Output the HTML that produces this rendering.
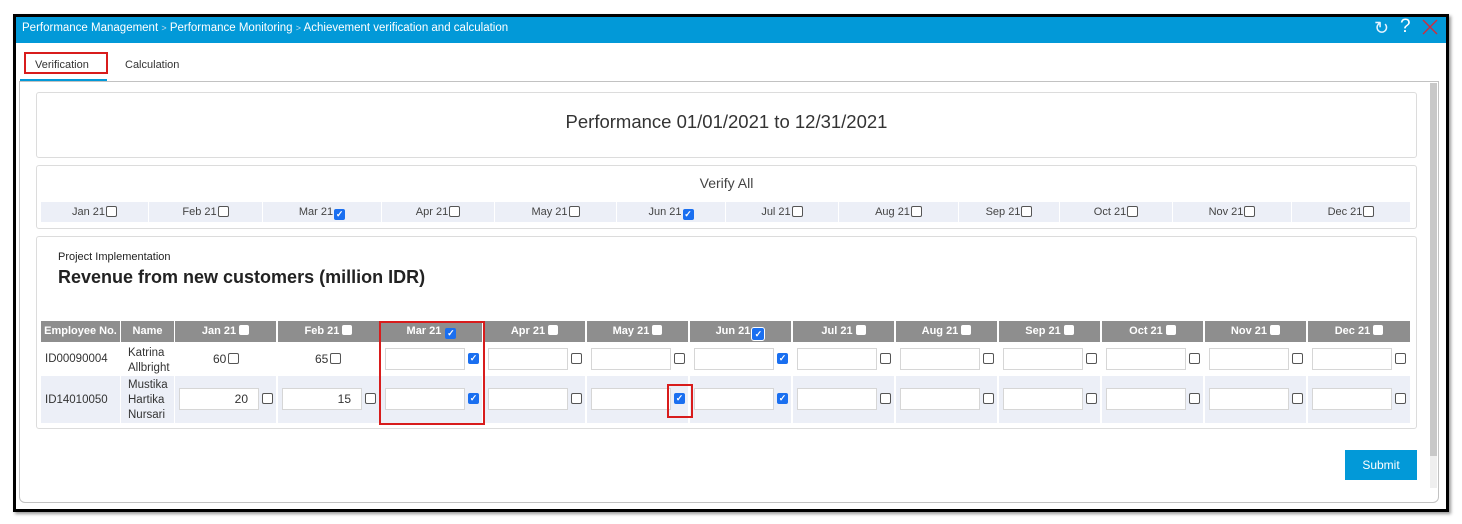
<!DOCTYPE html>
<html><head><meta charset="utf-8"><style>
*{box-sizing:border-box;margin:0;padding:0}
body{width:1462px;height:524px;background:#fff;position:relative;overflow:hidden;font-family:"Liberation Sans",sans-serif;font-size:11px;color:#333}
.a{position:absolute}
.cb{position:absolute;width:11px;height:11px;border:1px solid #555;border-radius:2px;background:#fff}
.ck{position:absolute;width:11px;height:11px;border-radius:2px;background:#1a6ff0;color:#fff;font-size:9px;line-height:11px;text-align:center;font-weight:bold}
.icb{display:inline-block;vertical-align:-2px;width:11px;height:11px;border:1px solid #555;border-radius:2px;background:#fff;margin-left:1px}
.ick{display:inline-block;vertical-align:-2px;width:11px;height:11px;border-radius:2px;background:#1a6ff0;color:#fff;font-size:9px;line-height:11px;text-align:center;font-weight:bold;margin-left:1px}
.iwb{display:inline-block;vertical-align:-1px;width:10px;height:10px;border-radius:2px;background:#fff}
.inp{position:absolute;width:80px;height:22px;border:1px solid #d6d6d6;background:#fff;text-align:right;padding-right:10px;line-height:20px;font-size:12px;color:#333}
.vc{position:absolute;top:202px;height:20px;background:#eceff7;text-align:center;line-height:20px;font-size:11px;color:#444;white-space:nowrap}
.hc{position:absolute;top:321px;height:21px;background:#8e8e8e;color:#fff;font-weight:bold;font-size:11px;text-align:center;line-height:21px;white-space:nowrap}
.r2{position:absolute;top:376px;height:47px;background:#eceff7}
.panel{position:absolute;left:36px;width:1381px;border:1px solid #dcdcdc;border-radius:3px;background:#fff}
</style></head><body>
<div class="a" style="left:13px;top:14px;width:1436px;height:498px;border:3px solid #000;box-shadow:2px 2px 3px #999"></div>
<div class="a" style="left:16px;top:17px;width:1430px;height:26px;background:#0299d8"></div>
<div class="a" style="left:22px;top:20px;color:#fff;font-size:11.5px;line-height:16px;white-space:nowrap">Performance Management <span style="font-size:9px;color:#cde">&gt;</span> Performance Monitoring <span style="font-size:9px;color:#cde">&gt;</span> Achievement verification and calculation</div>
<div class="a" style="left:1374px;top:17px;color:#e8f4ff;font-size:18px;line-height:22px">&#8635;</div>
<div class="a" style="left:1400px;top:16px;color:#fff;font-size:19px;line-height:22px">?</div>
<svg class="a" style="left:1422px;top:19px" width="16" height="16"><path d="M1 1L15 15M15 1L1 15" stroke="#d42a3a" stroke-width="1.4"/></svg>
<div class="a" style="left:24px;top:52px;width:84px;height:22px;border:2px solid #d81c1c"></div>
<div class="a" style="left:35px;top:59px;font-size:11px">Verification</div>
<div class="a" style="left:20px;top:79px;width:87px;height:2px;background:#0299d8"></div>
<div class="a" style="left:125px;top:59px;font-size:11px">Calculation</div>
<div class="a" style="left:19px;top:81px;width:1420px;height:422px;border:1px solid #c2c2c2;border-radius:0 0 6px 6px"></div>
<div class="a" style="left:1430px;top:83px;width:7px;height:373px;background:#c8c8c8"></div>
<div class="a" style="left:1430px;top:456px;width:7px;height:32px;background:#efefef"></div>

<div class="panel" style="top:92px;height:66px"></div>
<div class="a" style="left:36px;width:1381px;top:111px;text-align:center;font-size:18.5px;color:#333">Performance 01/01/2021 to 12/31/2021</div>
<div class="panel" style="top:165px;height:64px"></div>
<div class="a" style="left:36px;width:1381px;top:175px;text-align:center;font-size:14px;color:#444">Verify All</div>

<div class="vc" style="left:41px;width:107px">Jan 21<span class="icb"></span></div>
<div class="vc" style="left:149px;width:113px">Feb 21<span class="icb"></span></div>
<div class="vc" style="left:263px;width:118px">Mar 21<span class="ick">✓</span></div>
<div class="vc" style="left:382px;width:112px">Apr 21<span class="icb"></span></div>
<div class="vc" style="left:495px;width:121px">May 21<span class="icb"></span></div>
<div class="vc" style="left:617px;width:108px">Jun 21<span class="ick">✓</span></div>
<div class="vc" style="left:726px;width:112px">Jul 21<span class="icb"></span></div>
<div class="vc" style="left:839px;width:119px">Aug 21<span class="icb"></span></div>
<div class="vc" style="left:959px;width:100px">Sep 21<span class="icb"></span></div>
<div class="vc" style="left:1060px;width:112px">Oct 21<span class="icb"></span></div>
<div class="vc" style="left:1173px;width:118px">Nov 21<span class="icb"></span></div>
<div class="vc" style="left:1292px;width:118px">Dec 21<span class="icb"></span></div>

<div class="panel" style="top:236px;height:193px"></div>
<div class="a" style="left:58px;top:251px;font-size:11px;color:#222">Project Implementation</div>
<div class="a" style="left:58px;top:267px;font-size:18px;font-weight:bold;color:#222">Revenue from new customers (million IDR)</div>

<div class="hc" style="left:41px;width:79px">Employee No.</div>
<div class="hc" style="left:121px;width:53px">Name</div>
<div class="r2" style="left:41px;width:79px"></div><div class="r2" style="left:121px;width:53px"></div>
<div class="a" style="left:45px;top:353px;font-size:11.5px">ID00090004</div>
<div class="a" style="left:128px;top:346px;font-size:11.5px;line-height:15px">Katrina<br>Allbright</div>
<div class="a" style="left:45px;top:394px;font-size:11.5px">ID14010050</div>
<div class="a" style="left:128px;top:378px;font-size:11.5px;line-height:15px">Mustika<br>Hartika<br>Nursari</div>

<div class="hc" style="left:175px;width:101px">Jan 21 <span class="iwb"></span></div>
<div class="hc" style="left:278px;width:101px">Feb 21 <span class="iwb"></span></div>
<div class="hc" style="left:381px;width:101px">Mar 21 <span class="ick">✓</span></div>
<div class="hc" style="left:484px;width:101px">Apr 21 <span class="iwb"></span></div>
<div class="hc" style="left:587px;width:101px">May 21 <span class="iwb"></span></div>
<div class="hc" style="left:690px;width:101px">Jun 21<span class="ick" style="width:14px;height:14px;line-height:13px;border:1px solid #fff;border-radius:3px;vertical-align:-3px">✓</span></div>
<div class="hc" style="left:793px;width:101px">Jul 21 <span class="iwb"></span></div>
<div class="hc" style="left:896px;width:101px">Aug 21 <span class="iwb"></span></div>
<div class="hc" style="left:999px;width:101px">Sep 21 <span class="iwb"></span></div>
<div class="hc" style="left:1102px;width:101px">Oct 21 <span class="iwb"></span></div>
<div class="hc" style="left:1205px;width:101px">Nov 21 <span class="iwb"></span></div>
<div class="hc" style="left:1308px;width:102px">Dec 21 <span class="iwb"></span></div>

<div class="r2" style="left:175px;width:101px"></div><div class="r2" style="left:278px;width:101px"></div><div class="r2" style="left:381px;width:101px"></div><div class="r2" style="left:484px;width:101px"></div><div class="r2" style="left:587px;width:101px"></div><div class="r2" style="left:690px;width:101px"></div><div class="r2" style="left:793px;width:101px"></div><div class="r2" style="left:896px;width:101px"></div><div class="r2" style="left:999px;width:101px"></div><div class="r2" style="left:1102px;width:101px"></div><div class="r2" style="left:1205px;width:101px"></div><div class="r2" style="left:1308px;width:102px"></div>

<div class="a" style="left:213px;top:352px;font-size:12px">60</div><div class="cb" style="left:228px;top:353px"></div>
<div class="a" style="left:315px;top:352px;font-size:12px">65</div><div class="cb" style="left:330px;top:353px"></div>
<div class="inp" style="left:385px;top:348px"></div><div class="ck" style="left:468px;top:353px">✓</div>
<div class="inp" style="left:488px;top:348px"></div><div class="cb" style="left:571px;top:353px"></div>
<div class="inp" style="left:591px;top:348px"></div><div class="cb" style="left:674px;top:353px"></div>
<div class="inp" style="left:694px;top:348px"></div><div class="ck" style="left:777px;top:353px">✓</div>
<div class="inp" style="left:797px;top:348px"></div><div class="cb" style="left:880px;top:353px"></div>
<div class="inp" style="left:900px;top:348px"></div><div class="cb" style="left:983px;top:353px"></div>
<div class="inp" style="left:1003px;top:348px"></div><div class="cb" style="left:1086px;top:353px"></div>
<div class="inp" style="left:1106px;top:348px"></div><div class="cb" style="left:1189px;top:353px"></div>
<div class="inp" style="left:1209px;top:348px"></div><div class="cb" style="left:1292px;top:353px"></div>
<div class="inp" style="left:1312px;top:348px"></div><div class="cb" style="left:1395px;top:353px"></div>

<div class="inp" style="left:179px;top:388px">20</div><div class="cb" style="left:262px;top:393px"></div>
<div class="inp" style="left:282px;top:388px">15</div><div class="cb" style="left:365px;top:393px"></div>
<div class="inp" style="left:385px;top:388px"></div><div class="ck" style="left:468px;top:393px">✓</div>
<div class="inp" style="left:488px;top:388px"></div><div class="cb" style="left:571px;top:393px"></div>
<div class="inp" style="left:591px;top:388px"></div><div class="ck" style="left:674px;top:393px">✓</div>
<div class="inp" style="left:694px;top:388px"></div><div class="ck" style="left:777px;top:393px">✓</div>
<div class="inp" style="left:797px;top:388px"></div><div class="cb" style="left:880px;top:393px"></div>
<div class="inp" style="left:900px;top:388px"></div><div class="cb" style="left:983px;top:393px"></div>
<div class="inp" style="left:1003px;top:388px"></div><div class="cb" style="left:1086px;top:393px"></div>
<div class="inp" style="left:1106px;top:388px"></div><div class="cb" style="left:1189px;top:393px"></div>
<div class="inp" style="left:1209px;top:388px"></div><div class="cb" style="left:1292px;top:393px"></div>
<div class="inp" style="left:1312px;top:388px"></div><div class="cb" style="left:1395px;top:393px"></div>

<div class="a" style="left:379px;top:321px;width:106px;height:104px;border:2px solid #d81c1c"></div>
<div class="a" style="left:667px;top:384px;width:26px;height:34px;border:2px solid #d81c1c"></div>

<div class="a" style="left:1345px;top:450px;width:72px;height:30px;background:#0299d8;color:#fff;font-size:12px;text-align:center;line-height:30px">Submit</div>
</body></html>
